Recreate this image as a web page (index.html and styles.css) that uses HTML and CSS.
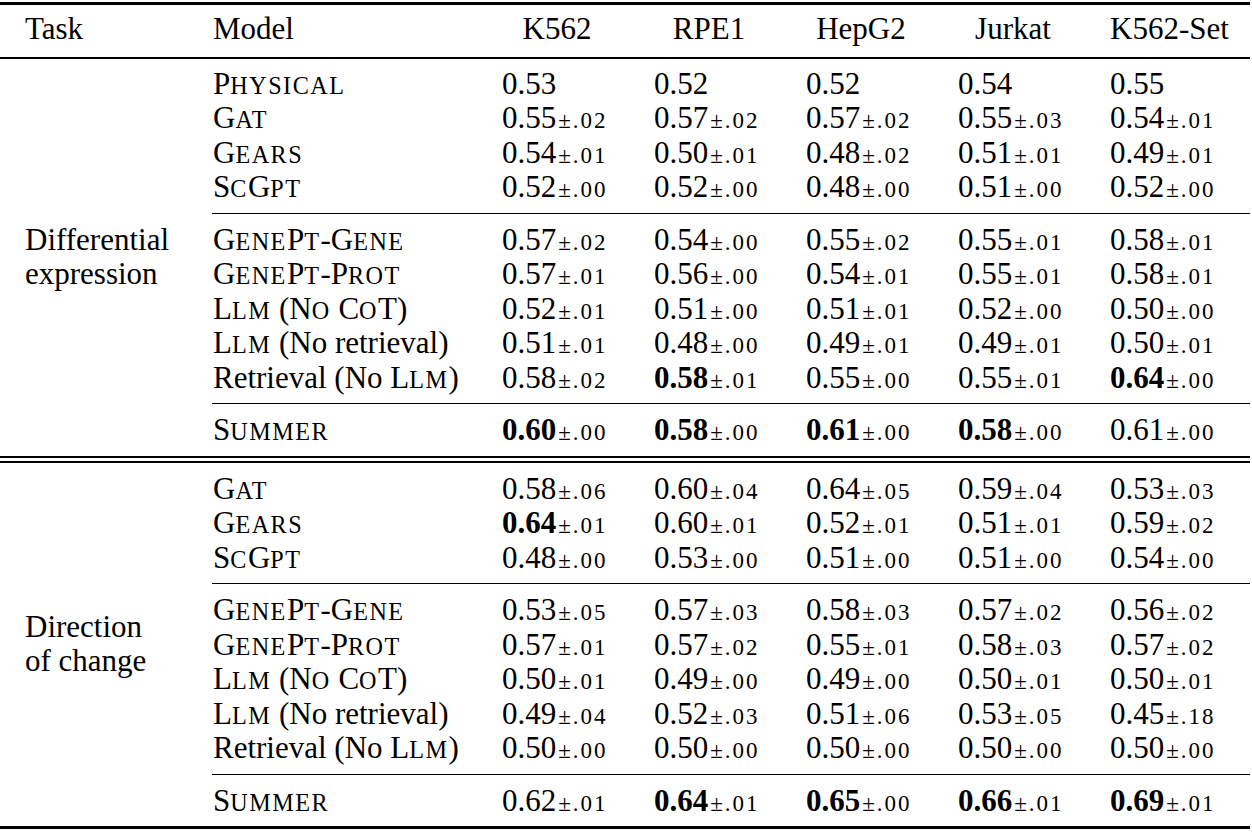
FILE: index.html
```html
<!DOCTYPE html>
<html lang="en">
<head>
  <meta charset="UTF-8" />
  <meta name="viewport" content="width=device-width, initial-scale=1.0" />
  <title>Results</title>
  <link rel="stylesheet" href="styles.css">
</head>
<body>

<table class="results">
  <colgroup>
    <col class="c-task" />
    <col class="c-model" />
    <col class="c-data" />
    <col class="c-data" />
    <col class="c-data" />
    <col class="c-data" />
    <col class="c-data" />
  </colgroup>
  <thead>
    <tr>
      <th class="task">Task</th>
      <th class="model">Model</th>
      <th>K562</th>
      <th>RPE1</th>
      <th>HepG2</th>
      <th>Jurkat</th>
      <th>K562-Set</th>
    </tr>
  </thead>
  <tbody>
    <!-- Differential expression -->
    <tr class="first">
      <td class="task" rowspan="10">Differential<br>expression</td>
      <td class="model">P<span class="k">hysical</span></td>
      <td>0.53</td><td>0.52</td><td>0.52</td><td>0.54</td><td>0.55</td>
    </tr>
    <tr>
      <td class="model">G<span class="k">at</span></td>
      <td>0.55<small>±.02</small></td><td>0.57<small>±.02</small></td><td>0.57<small>±.02</small></td><td>0.55<small>±.03</small></td><td>0.54<small>±.01</small></td>
    </tr>
    <tr>
      <td class="model">G<span class="k">ears</span></td>
      <td>0.54<small>±.01</small></td><td>0.50<small>±.01</small></td><td>0.48<small>±.02</small></td><td>0.51<small>±.01</small></td><td>0.49<small>±.01</small></td>
    </tr>
    <tr class="last">
      <td class="model">S<span class="k">c</span>G<span class="k">pt</span></td>
      <td>0.52<small>±.00</small></td><td>0.52<small>±.00</small></td><td>0.48<small>±.00</small></td><td>0.51<small>±.00</small></td><td>0.52<small>±.00</small></td>
    </tr>
    <tr class="group">
      <td class="model">G<span class="k">ene</span>P<span class="k">t</span>-G<span class="k">ene</span></td>
      <td>0.57<small>±.02</small></td><td>0.54<small>±.00</small></td><td>0.55<small>±.02</small></td><td>0.55<small>±.01</small></td><td>0.58<small>±.01</small></td>
    </tr>
    <tr>
      <td class="model">G<span class="k">ene</span>P<span class="k">t</span>-P<span class="k">rot</span></td>
      <td>0.57<small>±.01</small></td><td>0.56<small>±.00</small></td><td>0.54<small>±.01</small></td><td>0.55<small>±.01</small></td><td>0.58<small>±.01</small></td>
    </tr>
    <tr>
      <td class="model">L<span class="k">lm</span> (N<span class="k">o</span> C<span class="k">o</span>T)</td>
      <td>0.52<small>±.01</small></td><td>0.51<small>±.00</small></td><td>0.51<small>±.01</small></td><td>0.52<small>±.00</small></td><td>0.50<small>±.00</small></td>
    </tr>
    <tr>
      <td class="model">L<span class="k">lm</span> (No retrieval)</td>
      <td>0.51<small>±.01</small></td><td>0.48<small>±.00</small></td><td>0.49<small>±.01</small></td><td>0.49<small>±.01</small></td><td>0.50<small>±.01</small></td>
    </tr>
    <tr class="last">
      <td class="model">Retrieval (No L<span class="k">lm</span>)</td>
      <td>0.58<small>±.02</small></td><td><b>0.58</b><small>±.01</small></td><td>0.55<small>±.00</small></td><td>0.55<small>±.01</small></td><td><b>0.64</b><small>±.00</small></td>
    </tr>
    <tr class="group last">
      <td class="model">S<span class="k">ummer</span></td>
      <td><b>0.60</b><small>±.00</small></td><td><b>0.58</b><small>±.00</small></td><td><b>0.61</b><small>±.00</small></td><td><b>0.58</b><small>±.00</small></td><td>0.61<small>±.00</small></td>
    </tr>

    <!-- Direction of change -->
    <tr class="section">
      <td class="task" rowspan="9">Direction<br>of change</td>
      <td class="model">G<span class="k">at</span></td>
      <td>0.58<small>±.06</small></td><td>0.60<small>±.04</small></td><td>0.64<small>±.05</small></td><td>0.59<small>±.04</small></td><td>0.53<small>±.03</small></td>
    </tr>
    <tr>
      <td class="model">G<span class="k">ears</span></td>
      <td><b>0.64</b><small>±.01</small></td><td>0.60<small>±.01</small></td><td>0.52<small>±.01</small></td><td>0.51<small>±.01</small></td><td>0.59<small>±.02</small></td>
    </tr>
    <tr class="last">
      <td class="model">S<span class="k">c</span>G<span class="k">pt</span></td>
      <td>0.48<small>±.00</small></td><td>0.53<small>±.00</small></td><td>0.51<small>±.00</small></td><td>0.51<small>±.00</small></td><td>0.54<small>±.00</small></td>
    </tr>
    <tr class="group">
      <td class="model">G<span class="k">ene</span>P<span class="k">t</span>-G<span class="k">ene</span></td>
      <td>0.53<small>±.05</small></td><td>0.57<small>±.03</small></td><td>0.58<small>±.03</small></td><td>0.57<small>±.02</small></td><td>0.56<small>±.02</small></td>
    </tr>
    <tr>
      <td class="model">G<span class="k">ene</span>P<span class="k">t</span>-P<span class="k">rot</span></td>
      <td>0.57<small>±.01</small></td><td>0.57<small>±.02</small></td><td>0.55<small>±.01</small></td><td>0.58<small>±.03</small></td><td>0.57<small>±.02</small></td>
    </tr>
    <tr>
      <td class="model">L<span class="k">lm</span> (N<span class="k">o</span> C<span class="k">o</span>T)</td>
      <td>0.50<small>±.01</small></td><td>0.49<small>±.00</small></td><td>0.49<small>±.00</small></td><td>0.50<small>±.01</small></td><td>0.50<small>±.01</small></td>
    </tr>
    <tr>
      <td class="model">L<span class="k">lm</span> (No retrieval)</td>
      <td>0.49<small>±.04</small></td><td>0.52<small>±.03</small></td><td>0.51<small>±.06</small></td><td>0.53<small>±.05</small></td><td>0.45<small>±.18</small></td>
    </tr>
    <tr class="last">
      <td class="model">Retrieval (No L<span class="k">lm</span>)</td>
      <td>0.50<small>±.00</small></td><td>0.50<small>±.00</small></td><td>0.50<small>±.00</small></td><td>0.50<small>±.00</small></td><td>0.50<small>±.00</small></td>
    </tr>
    <tr class="group last">
      <td class="model">S<span class="k">ummer</span></td>
      <td>0.62<small>±.01</small></td><td><b>0.64</b><small>±.01</small></td><td><b>0.65</b><small>±.00</small></td><td><b>0.66</b><small>±.01</small></td><td><b>0.69</b><small>±.01</small></td>
    </tr>
  </tbody>
</table>

</body>
</html>
```

FILE: styles.css
```css
body {
  margin: 0;
  padding: 0;
  background: #fff;
  color: #000;
  font-family: 'Liberation Serif', 'Times New Roman', serif;
}

.results {
  width: 1250px;
  margin-top: 2px;
  border-collapse: collapse;
  table-layout: fixed;
  font-size: 31px;
  line-height: 34.5px;
  border-top: 3px solid #000;
  border-bottom: 3px solid #000;
}

.c-task {
  width: 212px;
}

.c-model {
  width: 278px;
}

.c-data {
  width: 152px;
}

th,
td {
  padding: 0 0 0 12px;
  text-align: left;
  vertical-align: baseline;
  white-space: nowrap;
}

th {
  font-weight: normal;
  text-align: center;
  padding: 7px 30px 10px 12px;
  border-bottom: 2px solid #000;
}

th.task,
td.task {
  padding-left: 25px;
  text-align: left;
}

td.task {
  vertical-align: middle;
}

th.model,
td.model {
  padding-left: 1px;
  text-align: left;
}

/* small capitals, drawn a bit larger than the browser's own */
.k {
  font-size: 0.78em;
  line-height: 1;
  text-transform: uppercase;
  letter-spacing: 1.5px;
}

small {
  font-size: 23px;
  line-height: 1;
  letter-spacing: 2px;
  margin-left: 2px;
}

b {
  font-weight: bold;
}

/* rules between groups */
tr.first td {
  padding-top: 8px;
}

tr.last td {
  padding-bottom: 8px;
}

tr.group td {
  padding-top: 9px;
  border-top: 1px solid #000;
}

tr.section td {
  padding-top: 9px;
  border-top: 7px double #000;
}

tr.last td.task,
tr.first td.task,
tr.section td.task {
  padding-top: 0;
  padding-bottom: 0;
}
```
